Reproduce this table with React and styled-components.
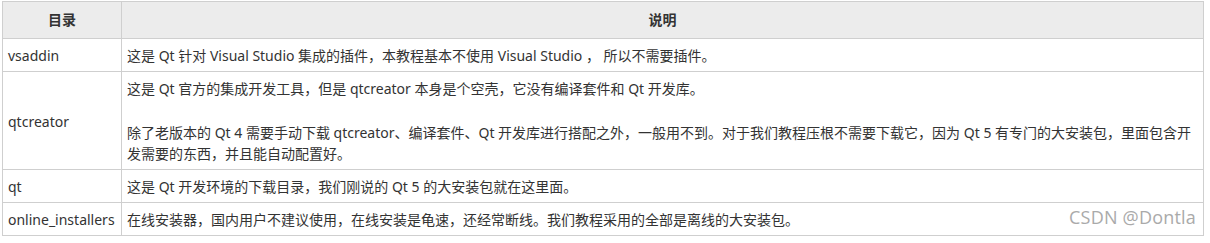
import React from "react";
import styled, { createGlobalStyle } from "styled-components";

const Global = createGlobalStyle`
  html, body { margin: 0; padding: 0; background: #fff; }
  body {
    font-family: "Noto Sans", "Noto Sans CJK SC", sans-serif;
    color: #333;
  }
`;

const Page = styled.div`
  position: relative;
  padding: 1px 0 0 2px;
  width: 1202px;
`;

const Table = styled.table`
  border-collapse: collapse;
  width: 1202px;
  table-layout: fixed;
  font-size: 14px;
  line-height: 21px;
`;

const HeadCell = styled.th`
  background: #ececec;
  border: 1px solid #cfcfcf;
  font-weight: bold;
  text-align: center;
  padding: 7px 6px 8px;
  height: 21px;
  color: #333;
  width: ${(p) => (p.$narrow ? "106px" : "auto")};
`;

const Cell = styled.td`
  border: 1px solid #cfcfcf;
  padding: 6px 5px 5px 5px;
  vertical-align: middle;
  color: #333;
`;

const Para = styled.p`
  margin: 0;
  & + & {
    margin-top: 23px;
  }
`;

const Watermark = styled.div`
  position: absolute;
  right: 8px;
  top: 204px;
  font-family: "Open Sans", "Noto Sans", sans-serif;
  font-size: 18px;
  line-height: 26px;
  letter-spacing: 0.2px;
  color: #aaaaaa;
  pointer-events: none;
`;

const rows = [
  {
    dir: "vsaddin",
    desc: [
      "这是 Qt 针对 Visual Studio 集成的插件，本教程基本不使用 Visual Studio ， 所以不需要插件。",
    ],
  },
  {
    dir: "qtcreator",
    desc: [
      "这是 Qt 官方的集成开发工具，但是 qtcreator 本身是个空壳，它没有编译套件和 Qt 开发库。",
      "除了老版本的 Qt 4 需要手动下载 qtcreator、编译套件、Qt 开发库进行搭配之外，一般用不到。对于我们教程压根不需要下载它，因为 Qt 5 有专门的大安装包，里面包含开发需要的东西，并且能自动配置好。",
    ],
  },
  {
    dir: "qt",
    desc: ["这是 Qt 开发环境的下载目录，我们刚说的 Qt 5 的大安装包就在这里面。"],
  },
  {
    dir: "online_installers",
    desc: [
      "在线安装器，国内用户不建议使用，在线安装是龟速，还经常断线。我们教程采用的全部是离线的大安装包。",
    ],
  },
];

export default function App() {
  return (
    <>
      <Global />
      <Page>
        <Table>
          <thead>
            <tr>
              <HeadCell $narrow>目录</HeadCell>
              <HeadCell>说明</HeadCell>
            </tr>
          </thead>
          <tbody>
            {rows.map((r) => (
              <tr key={r.dir}>
                <Cell>{r.dir}</Cell>
                <Cell>
                  {r.desc.map((d, i) => (
                    <Para key={i}>{d}</Para>
                  ))}
                </Cell>
              </tr>
            ))}
          </tbody>
        </Table>
        <Watermark>CSDN @Dontla</Watermark>
      </Page>
    </>
  );
}
